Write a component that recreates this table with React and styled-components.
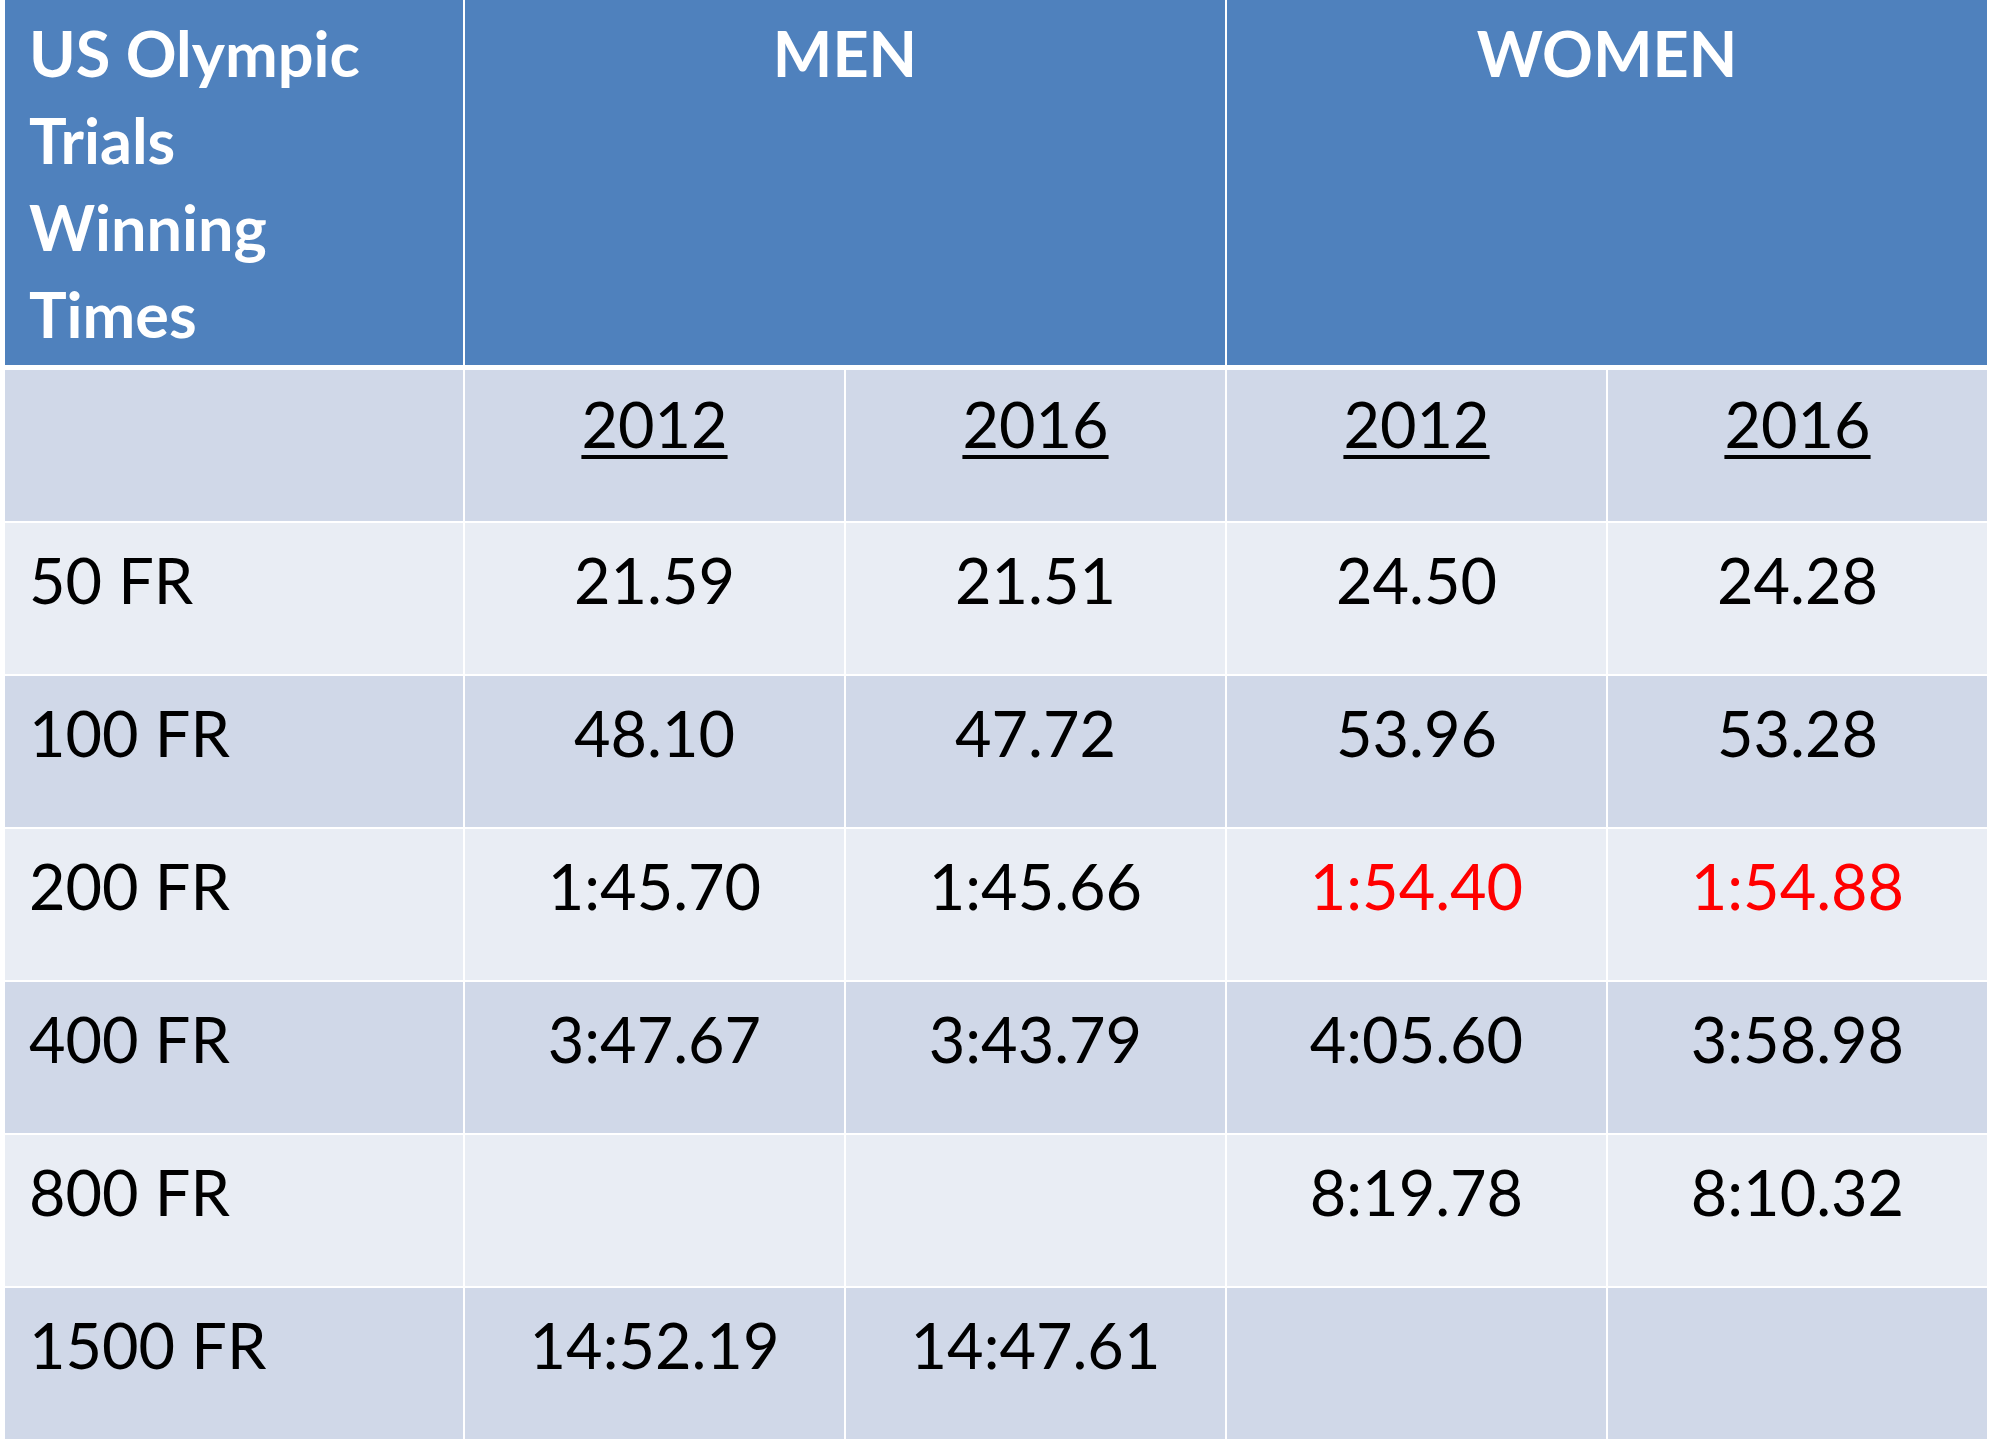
import React from 'react';
import styled, { createGlobalStyle } from 'styled-components';

const GlobalStyle = createGlobalStyle`
  html, body {
    margin: 0;
    padding: 0;
    background: #ffffff;
  }
`;

const rows = [
  { event: '50 FR', times: ['21.59', '21.51', '24.50', '24.28'] },
  { event: '100 FR', times: ['48.10', '47.72', '53.96', '53.28'] },
  { event: '200 FR', times: ['1:45.70', '1:45.66', '1:54.40', '1:54.88'], red: [2, 3] },
  { event: '400 FR', times: ['3:47.67', '3:43.79', '4:05.60', '3:58.98'] },
  { event: '800 FR', times: ['', '', '8:19.78', '8:10.32'] },
  { event: '1500 FR', times: ['14:52.19', '14:47.61', '', ''] },
];

const Page = styled.div`
  width: 1991px;
  height: 1445px;
  padding: 0 4px 0 5px;
  box-sizing: border-box;
  background: #ffffff;
  font-family: Lato, 'Open Sans', sans-serif;
`;

const Table = styled.div`
  display: grid;
  grid-template-columns: 458px repeat(4, 1fr);
  grid-template-rows: 368px repeat(7, 1fr);
  height: 1439px;
  column-gap: 2px;
  row-gap: 2px;
  background: #ffffff;
`;

const HeadCell = styled.div`
  grid-column: span ${p => p.$span || 1};
  background: #4f81bd;
  color: #ffffff;
  font-weight: 700;
  font-size: 63px;
  line-height: 87px;
  padding: 9px 24px 0;
  text-align: ${p => (p.$center ? 'center' : 'left')};
  border-bottom: 3px solid #ffffff;
`;

const Cell = styled.div`
  background: ${p => (p.$dark ? '#d0d8e8' : '#e9edf4')};
  color: ${p => (p.$red ? '#ff0000' : '#000000')};
  font-size: 63px;
  line-height: 84px;
  padding: ${p => (p.$year ? '12px' : '15px')} 24px 0;
  text-align: ${p => (p.$center ? 'center' : 'left')};
  white-space: nowrap;
`;

const Year = styled.span`
  text-decoration: underline;
  text-decoration-thickness: 4px;
  text-underline-offset: 7px;
`;

export default function App() {
  return (
    <>
      <GlobalStyle />
      <Page>
        <Table>
          <HeadCell>
            US Olympic<br />Trials<br />Winning<br />Times
          </HeadCell>
          <HeadCell $span={2} $center>MEN</HeadCell>
          <HeadCell $span={2} $center>WOMEN</HeadCell>

          <Cell $dark />
          {['2012', '2016', '2012', '2016'].map((y, i) => (
            <Cell key={i} $dark $center $year>
              <Year>{y}</Year>
            </Cell>
          ))}

          {rows.map((r, ri) => {
            const dark = ri % 2 === 1;
            return (
              <React.Fragment key={r.event}>
                <Cell $dark={dark}>{r.event}</Cell>
                {r.times.map((t, ci) => (
                  <Cell
                    key={ci}
                    $dark={dark}
                    $center
                    $red={r.red && r.red.includes(ci)}
                  >
                    {t}
                  </Cell>
                ))}
              </React.Fragment>
            );
          })}
        </Table>
      </Page>
    </>
  );
}
